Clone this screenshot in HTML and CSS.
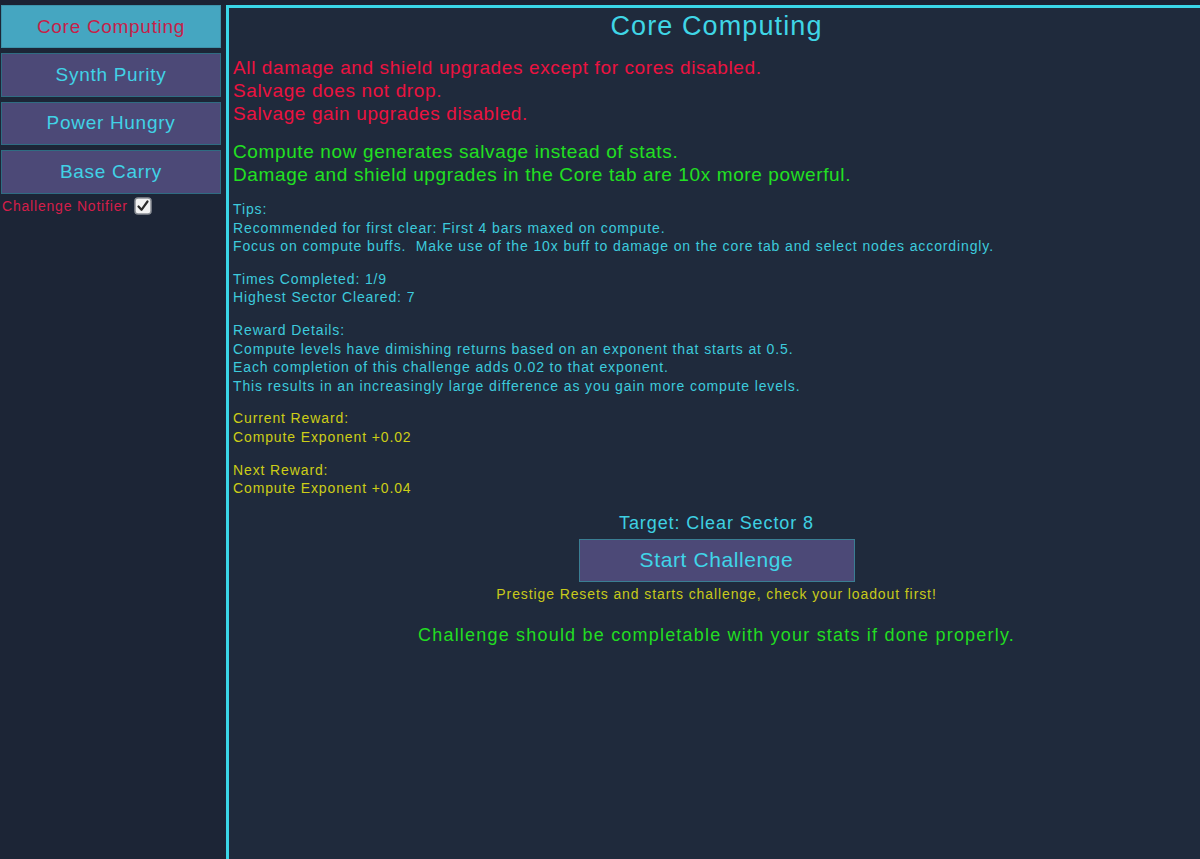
FILE: index.html
```html
<!DOCTYPE html>
<html>
<head>
<meta charset="utf-8">
<link rel="stylesheet" href="styles.css">
</head>
<body>
<div class="app">
  <aside class="sidebar">
    <div class="tab active">Core Computing</div>
    <div class="tab">Synth Purity</div>
    <div class="tab">Power Hungry</div>
    <div class="tab">Base Carry</div>
    <div class="notifier">
      <span>Challenge Notifier</span>
      <svg class="check" width="18" height="18" viewBox="0 0 18 18">
        <rect x="1" y="1" width="16" height="16" rx="3" fill="#f2f2f2" stroke="#8a8f96" stroke-width="1.5"/>
        <path d="M4.5 9.5 L7.5 12.8 L13.5 4.5" fill="none" stroke="#2a2a2a" stroke-width="2.2" stroke-linecap="round" stroke-linejoin="round"/>
      </svg>
    </div>
  </aside>
  <main class="panel">
    <h1 class="title">Core Computing</h1>
    <div class="block red big">
      <div>All damage and shield upgrades except for cores disabled.</div>
      <div>Salvage does not drop.</div>
      <div>Salvage gain upgrades disabled.</div>
    </div>
    <div class="block green big">
      <div>Compute now generates salvage instead of stats.</div>
      <div>Damage and shield upgrades in the Core tab are 10x more powerful.</div>
    </div>
    <div class="block cyan small">
      <div>Tips:</div>
      <div>Recommended for first clear: First 4 bars maxed on compute.</div>
      <div>Focus on compute buffs.&nbsp; Make use of the 10x buff to damage on the core tab and select nodes accordingly.</div>
    </div>
    <div class="block cyan small">
      <div>Times Completed: 1/9</div>
      <div>Highest Sector Cleared: 7</div>
    </div>
    <div class="block cyan small">
      <div>Reward Details:</div>
      <div>Compute levels have dimishing returns based on an exponent that starts at 0.5.</div>
      <div>Each completion of this challenge adds 0.02 to that exponent.</div>
      <div>This results in an increasingly large difference as you gain more compute levels.</div>
    </div>
    <div class="block yellow small">
      <div>Current Reward:</div>
      <div>Compute Exponent +0.02</div>
    </div>
    <div class="block yellow small">
      <div>Next Reward:</div>
      <div>Compute Exponent +0.04</div>
    </div>
    <div class="center">
      <div class="target">Target: Clear Sector 8</div>
      <div class="start">Start Challenge</div>
      <div class="warn">Prestige Resets and starts challenge, check your loadout first!</div>
      <div class="doable">Challenge should be completable with your stats if done properly.</div>
    </div>
  </main>
</div>
</body>
</html>
```
FILE: styles.css
```css
html, body {
  margin: 0;
  padding: 0;
  width: 1200px;
  height: 859px;
  overflow: hidden;
  background: #1b2233;
  font-family: "Liberation Sans", Arial, sans-serif;
}
.app {
  display: flex;
  height: 900px;
  padding-top: 5px;
  box-sizing: border-box;
}
.sidebar {
  width: 226px;
  flex: none;
  display: flex;
  flex-direction: column;
  gap: 5px;
  background: #1c2536;
}
.tab {
  width: 220px;
  height: 43.4px;
  margin-left: 1px;
  box-sizing: border-box;
  border: 1px solid #2f6c82;
  background: #4c4977;
  color: #41d2e6;
  font-size: 19px;
  letter-spacing: 0.7px;
  display: flex;
  align-items: center;
  justify-content: center;
}
.tab.active {
  background: #45a6c1;
  color: #c61f4a;
  border-color: #3d93ab;
}
.notifier {
  display: flex;
  align-items: center;
  gap: 6px;
  margin-top: -2px;
  padding-left: 2px;
  color: #d41e4a;
  font-size: 14px;
  letter-spacing: 0.8px;
}
.check { display: block; }
.panel {
  width: 978px;
  flex: none;
  box-sizing: border-box;
  border: 3px solid #3ad6e8;
  border-right: none;
  border-bottom: none;
  background: #1f2a3c;
  padding: 0 4px;
}
.title {
  margin: 2px 0 14px;
  text-align: center;
  font-weight: normal;
  font-size: 27px;
  line-height: 32px;
  letter-spacing: 1.1px;
  color: #3fd6e6;
}
.block { margin-bottom: 14px; }
.big { font-size: 19px; line-height: 23px; letter-spacing: 0.62px; }
.small { font-size: 14px; line-height: 18.6px; letter-spacing: 0.88px; }
.red { color: #ec1240; }
.green { color: #22e022; }
.cyan { color: #3dcbdc; }
.yellow { color: #cccd17; }
.big.red { margin-bottom: 15px; }
.center {
  display: flex;
  flex-direction: column;
  align-items: center;
  margin-top: 2px;
}
.target {
  color: #3ed0e2;
  font-size: 18px;
  line-height: 22px;
  letter-spacing: 0.9px;
}
.start {
  margin-top: 5px;
  width: 276px;
  height: 43px;
  box-sizing: border-box;
  border: 1px solid #3a7e93;
  background: #4c4977;
  color: #40d5e8;
  font-size: 21px;
  letter-spacing: 0.6px;
  display: flex;
  align-items: center;
  justify-content: center;
}
.warn {
  margin-top: 3px;
  color: #c8c91a;
  font-size: 14px;
  line-height: 18px;
  letter-spacing: 0.9px;
}
.doable {
  margin-top: 21px;
  color: #22dd22;
  font-size: 18px;
  line-height: 22px;
  letter-spacing: 1.2px;
}
```
